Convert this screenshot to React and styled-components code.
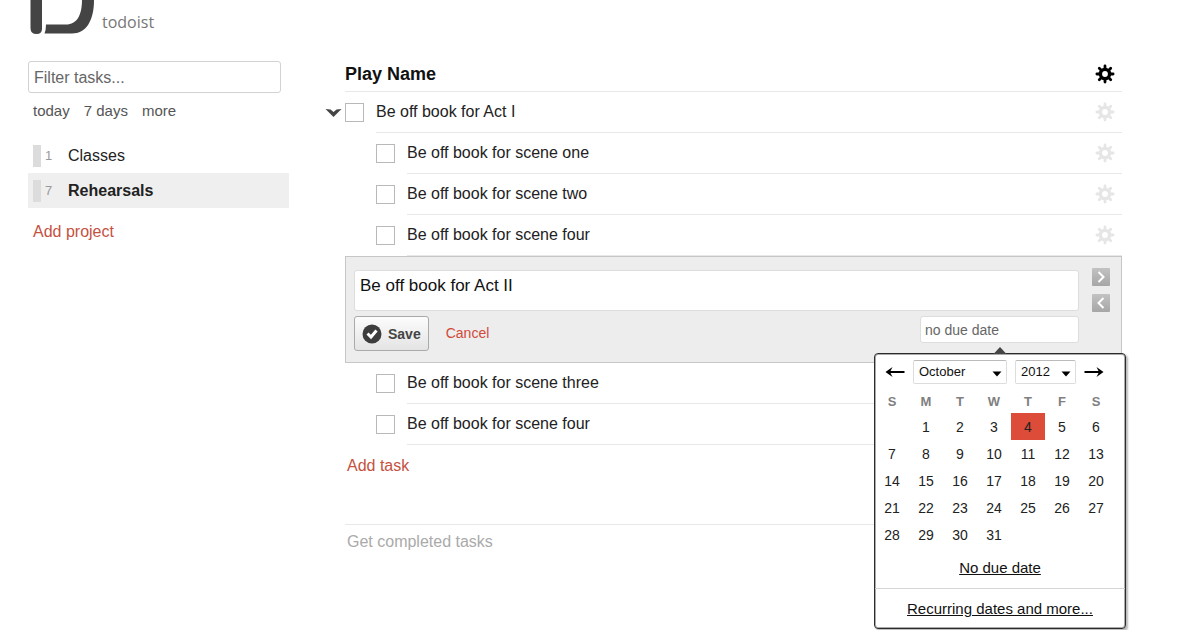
import React, { useState } from 'react';
import styled, { createGlobalStyle } from 'styled-components';

const GlobalStyle = createGlobalStyle`
  * {
    box-sizing: border-box;
  }
  body {
    margin: 0;
    background: #fff;
    color: #222;
    font-family: "Liberation Sans", Arial, sans-serif;
    font-size: 16px;
    line-height: 20px;
  }
  button, input, select, textarea {
    font-family: inherit;
    margin: 0;
  }
  a {
    text-decoration: none;
  }
`;

const Page = styled.div`
  min-height: 100vh;
`;

const Header = styled.header`
  display: flex;
  align-items: flex-start;
  gap: 8px;
  height: 61px;
  padding-left: 30px;
`;

const Brand = styled.span`
  padding-top: 12px;
  font-family: "Open Sans", sans-serif;
  font-size: 16px;
  color: #777;
`;

const Layout = styled.div`
  display: grid;
  grid-template-columns: 261px 1fr;
  gap: 56px;
  padding: 0 78px 0 28px;
`;

const Filter = styled.input`
  display: block;
  width: 253px;
  height: 32px;
  padding: 1px 5px 0;
  border: 1px solid #d2d2d2;
  border-radius: 3px;
  font-size: 16px;
  color: #222;
  &::placeholder {
    color: #666;
    opacity: 1;
  }
`;

const QuickLinks = styled.nav`
  display: flex;
  gap: 14px;
  padding: 8px 5px 0;
  margin-bottom: 17px;
`;

const QuickLink = styled.a`
  font-size: 15px;
  color: #555;
`;

const ProjectList = styled.ul`
  list-style: none;
  margin: 0;
  padding: 0;
`;

const Project = styled.li`
  display: flex;
  align-items: center;
  height: 35px;
  padding-left: 5px;
  background: ${(props) => (props.$active ? '#efefef' : 'transparent')};
`;

const ColorBar = styled.span`
  width: 8px;
  height: 22px;
  background: #dcdcdc;
`;

const Count = styled.span`
  width: 27px;
  padding-left: 4px;
  font-size: 13px;
  color: #999;
`;

const ProjectName = styled.a`
  color: #222;
  font-weight: ${(props) => (props.$active ? 'bold' : 'normal')};
`;

const AddLink = styled.a`
  display: flex;
  align-items: center;
  height: 41px;
  padding-left: ${(props) => props.$indent};
  color: #c5513f;
`;

const SidebarAdd = styled.div`
  padding-top: 3px;
`;

const TitleRow = styled.div`
  display: flex;
  align-items: center;
  justify-content: space-between;
  height: 31px;
  padding: 0 7px 4px 0;
  border-bottom: 1px solid #e8e8e8;
`;

const Title = styled.h1`
  margin: 0;
  font-size: 18px;
  line-height: 24px;
  color: #111;
`;

const GearButton = styled.button`
  display: flex;
  padding: 0;
  border: 0;
  background: none;
  color: ${(props) => (props.$dark ? '#000' : '#e6e6e6')};
`;

const TaskRow = styled.div`
  display: flex;
  align-items: center;
  height: 41px;
  padding-left: ${(props) => (props.$level ? '31px' : '0')};
`;

const Toggle = styled.button`
  display: flex;
  width: 20px;
  margin-left: -20px;
  padding: 0;
  border: 0;
  background: none;
`;

const Check = styled.input`
  appearance: none;
  flex: none;
  width: 19px;
  height: 19px;
  margin: 0 12px 0 0;
  border: 1px solid #b9b9b9;
  background: #fff;
`;

const TaskBody = styled.div`
  display: flex;
  flex: 1;
  align-items: center;
  justify-content: space-between;
  height: 41px;
  padding-right: 7px;
  border-bottom: 1px solid #e8e8e8;
`;

const Editor = styled.form`
  display: grid;
  grid-template-columns: 1fr 18px;
  gap: 13px;
  height: 107px;
  padding: 13px 11px 0 8px;
  border: 1px solid #c6c6c6;
  background: #ededed;
`;

const EditorText = styled.textarea`
  display: block;
  width: 100%;
  height: 41px;
  padding: 5px;
  border: 1px solid #ddd;
  border-radius: 3px;
  font-size: 17px;
  line-height: 20px;
  color: #111;
  resize: none;
`;

const EditorActions = styled.div`
  display: flex;
  align-items: flex-start;
  padding-top: 5px;
`;

const SaveButton = styled.button`
  display: flex;
  align-items: center;
  gap: 6px;
  height: 35px;
  padding: 0 7px;
  border: 1px solid #aaa;
  border-radius: 3px;
  background: linear-gradient(#fcfcfc, #e4e4e4);
  font-size: 14px;
  font-weight: bold;
  color: #444;
`;

const Cancel = styled.a`
  margin-left: 17px;
  line-height: 35px;
  font-size: 14px;
  color: #d1493b;
`;

const DueWrap = styled.div`
  position: relative;
  margin-left: auto;
`;

const DueInput = styled.input`
  display: block;
  width: 159px;
  height: 27px;
  padding: 0 4px;
  border: 1px solid #ddd;
  border-radius: 3px;
  font-size: 14px;
  &::placeholder {
    color: #666;
    opacity: 1;
  }
`;

const IndentButtons = styled.div`
  display: flex;
  flex-direction: column;
  gap: 8px;
  margin-top: -2px;
`;

const IndentButton = styled.button`
  display: flex;
  align-items: center;
  justify-content: center;
  width: 18px;
  height: 18px;
  padding: 0;
  border: 0;
  border-radius: 1px;
  background: linear-gradient(#c2c2c2, #a6a6a6);
`;

const Popup = styled.div`
  position: absolute;
  top: 37px;
  left: -46px;
  z-index: 2;
  width: 252px;
  border: 1px solid #2c2c2c;
  border-radius: 4px;
  background: #fff;
  box-shadow: 2px 2px 2px #bbb, inset 0 0 0 1px #aaa;
`;

const Pointer = styled.svg`
  position: absolute;
  top: -7px;
  left: 118px;
`;

const PopupHead = styled.div`
  display: flex;
  align-items: center;
  justify-content: space-between;
  height: 36px;
  padding: 0 21px 0 10px;
`;

const ArrowButton = styled.button`
  display: flex;
  padding: 0;
  border: 0;
  background: none;
`;

const SelectBox = styled.span`
  position: relative;
  width: ${(props) => props.$width};
  svg {
    position: absolute;
    right: 5px;
    bottom: 7px;
    pointer-events: none;
  }
`;

const Select = styled.select`
  appearance: none;
  display: block;
  width: 100%;
  height: 24px;
  padding: 0 5px 2px;
  border: 1px solid #ddd;
  border-top-color: #bbb;
  border-radius: 2px;
  background: #fff;
  font-size: 13px;
  color: #111;
`;

const Calendar = styled.table`
  table-layout: fixed;
  width: 238px;
  border-collapse: collapse;
  font-size: 14px;
  text-align: center;
  th {
    height: 23px;
    padding: 0;
    color: #808080;
    font-size: 13px;
  }
`;

const Day = styled.td`
  height: 27px;
  padding: 0;
  background: ${(props) => (props.$selected ? '#dd4b39' : 'transparent')};
`;

const PopupFoot = styled.div`
  display: flex;
  align-items: center;
  justify-content: center;
  height: 40px;
  border-top: ${(props) => (props.$divided ? '1px solid #d5d5d5' : '0')};
`;

const PopupLink = styled.a`
  font-size: 15px;
  color: #111;
  text-decoration: underline;
`;

const Completed = styled.div`
  margin-top: 38px;
  padding: 7px 2px;
  border-top: 1px solid #e8e8e8;
  a {
    color: #aaa;
  }
`;

const Gear = () => (
  <svg width="20" height="20" viewBox="0 0 20 20" fill="none" stroke="currentColor">
    <circle cx="10" cy="10" r="4.6" strokeWidth="3.4" />
    {[0, 45, 90, 135, 180, 225, 270, 315].map((a) => (
      <path key={a} d="M10 5V1.9" strokeWidth="2.8" strokeLinecap="round" transform={`rotate(${a} 10 10)`} />
    ))}
  </svg>
);

const Caret = () => (
  <svg width="10" height="6" viewBox="0 0 10 6"><path d="M0.5 0.5H9.5L5 5.5Z" fill="#000" /></svg>
);

const Arrow = ({ back }) => (
  <svg width="20" height="14" viewBox="0 0 20 14" fill="#000">
    {back
      ? <path d="M0.5 7L7.5 2L5.5 6H19.5V8H5.5L7.5 12Z" />
      : <path d="M19.5 7L12.5 2L14.5 6H0.5V8H14.5L12.5 12Z" />}
  </svg>
);

const weeks = [
  ['', 1, 2, 3, 4, 5, 6],
  [7, 8, 9, 10, 11, 12, 13],
  [14, 15, 16, 17, 18, 19, 20],
  [21, 22, 23, 24, 25, 26, 27],
  [28, 29, 30, 31, '', '', ''],
];

const before = [
  { id: 't1', name: 'Be off book for Act I', level: 0 },
  { id: 't2', name: 'Be off book for scene one', level: 1 },
  { id: 't3', name: 'Be off book for scene two', level: 1 },
  { id: 't4', name: 'Be off book for scene four', level: 1 },
];

const after = [
  { id: 't5', name: 'Be off book for scene three', level: 1 },
  { id: 't6', name: 'Be off book for scene four', level: 1 },
];

function Task({ task }) {
  return (
    <TaskRow $level={task.level}>
      {task.level === 0 && (
        <Toggle type="button" aria-label="Collapse">
          <svg width="17" height="10" viewBox="0 0 17 10"><path d="M0.5 1L5.5 1.5L8.5 4L11.5 1.5L16.5 1L8.5 9Z" fill="#444" /></svg>
        </Toggle>
      )}
      <Check type="checkbox" id={task.id} />
      <TaskBody>
        <label htmlFor={task.id}>{task.name}</label>
        <GearButton type="button" aria-label="Task options"><Gear /></GearButton>
      </TaskBody>
    </TaskRow>
  );
}

function DatePicker() {
  const [day, setDay] = useState(4);

  return (
    <Popup>
      <Pointer width="14" height="7" viewBox="0 0 14 7"><path d="M0.5 7L7 0L13.5 7Z" fill="#444" /></Pointer>
      <PopupHead>
        <ArrowButton type="button" aria-label="Previous month"><Arrow back /></ArrowButton>
        <SelectBox $width="94px">
          <Select aria-label="Month" defaultValue="October">
            <option>September</option>
            <option>October</option>
            <option>November</option>
          </Select>
          <Caret />
        </SelectBox>
        <SelectBox $width="61px">
          <Select aria-label="Year" defaultValue="2012">
            <option>2012</option>
            <option>2013</option>
          </Select>
          <Caret />
        </SelectBox>
        <ArrowButton type="button" aria-label="Next month"><Arrow /></ArrowButton>
      </PopupHead>
      <Calendar>
        <thead>
          <tr>
            {['S', 'M', 'T', 'W', 'T', 'F', 'S'].map((d, i) => <th key={i}>{d}</th>)}
          </tr>
        </thead>
        <tbody>
          {weeks.map((week, i) => (
            <tr key={i}>
              {week.map((d, j) => (
                <Day key={j} $selected={d === day} onClick={() => d && setDay(d)}>{d}</Day>
              ))}
            </tr>
          ))}
        </tbody>
      </Calendar>
      <PopupFoot><PopupLink href="#none">No due date</PopupLink></PopupFoot>
      <PopupFoot $divided><PopupLink href="#recurring">Recurring dates and more...</PopupLink></PopupFoot>
    </Popup>
  );
}

function App() {
  const [text, setText] = useState('Be off book for Act II');

  return (
    <Page>
      <GlobalStyle />
      <Header>
        <svg width="64" height="34" viewBox="0 0 64 34" fill="#444">
          <path d="M0.5 0H12V29Q12 34 6.5 34Q0.5 34 0.5 28Z" />
          <path d="M16 24.5H36C47 24.5 52 15 52 0H64C64 21 56 33.5 42 33.5H14.5Q16 30 16 24.5Z" />
        </svg>
        <Brand>todoist</Brand>
      </Header>
      <Layout>
        <aside>
          <Filter type="text" placeholder="Filter tasks..." aria-label="Filter tasks" />
          <QuickLinks>
            <QuickLink href="#today">today</QuickLink>
            <QuickLink href="#week">7 days</QuickLink>
            <QuickLink href="#more">more</QuickLink>
          </QuickLinks>
          <ProjectList>
            <Project>
              <ColorBar />
              <Count>1</Count>
              <ProjectName href="#classes">Classes</ProjectName>
            </Project>
            <Project $active>
              <ColorBar />
              <Count>7</Count>
              <ProjectName $active href="#rehearsals">Rehearsals</ProjectName>
            </Project>
          </ProjectList>
          <SidebarAdd>
            <AddLink $indent="5px" href="#add-project">Add project</AddLink>
          </SidebarAdd>
        </aside>
        <main>
          <TitleRow>
            <Title>Play Name</Title>
            <GearButton $dark type="button" aria-label="Project options"><Gear /></GearButton>
          </TitleRow>
          {before.map((task) => <Task key={task.id} task={task} />)}
          <Editor onSubmit={(e) => e.preventDefault()}>
            <div>
              <EditorText aria-label="Task name" value={text} onChange={(e) => setText(e.target.value)} />
              <EditorActions>
                <SaveButton type="submit">
                  <svg width="20" height="20" viewBox="0 0 20 20">
                    <circle cx="10" cy="10" r="9.5" fill="#3d3d3d" />
                    <path d="M5.5 9.5L9 13L14.5 6.5" fill="none" stroke="#fff" strokeWidth="3" />
                  </svg>
                  Save
                </SaveButton>
                <Cancel href="#cancel">Cancel</Cancel>
                <DueWrap>
                  <DueInput type="text" placeholder="no due date" aria-label="Due date" />
                  <DatePicker />
                </DueWrap>
              </EditorActions>
            </div>
            <IndentButtons>
              <IndentButton type="button" aria-label="Indent">
                <svg width="10" height="12" viewBox="0 0 10 12" fill="none" stroke="#fff" strokeWidth="2"><path d="M2.5 1L7.5 6L2.5 11" /></svg>
              </IndentButton>
              <IndentButton type="button" aria-label="Outdent">
                <svg width="10" height="12" viewBox="0 0 10 12" fill="none" stroke="#fff" strokeWidth="2"><path d="M7.5 1L2.5 6L7.5 11" /></svg>
              </IndentButton>
            </IndentButtons>
          </Editor>
          {after.map((task) => <Task key={task.id} task={task} />)}
          <AddLink $indent="2px" href="#add-task">Add task</AddLink>
          <Completed><a href="#completed">Get completed tasks</a></Completed>
        </main>
      </Layout>
    </Page>
  );
}

export default App;
